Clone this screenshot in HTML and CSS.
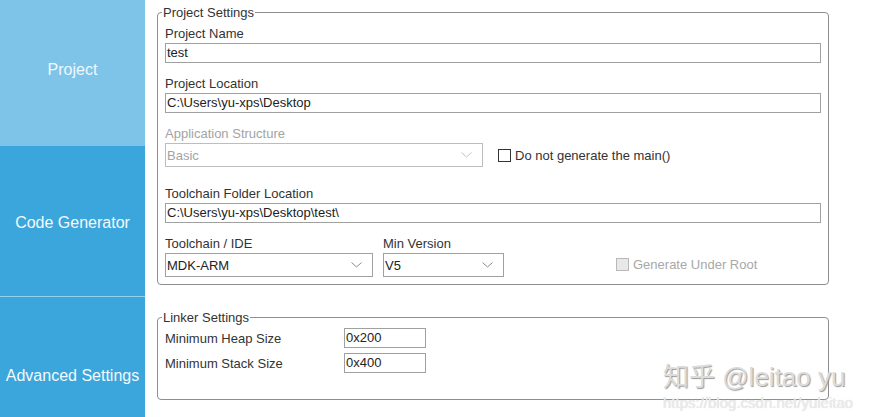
FILE: index.html
```html
<!DOCTYPE html>
<html lang="en">
<head>
<meta charset="utf-8">
<title>Project Manager</title>
<link rel="stylesheet" href="styles.css">
</head>
<body>
<div class="page">
  <nav class="sidebar">
    <div class="tab tab-project">Project</div>
    <div class="tab tab-code">Code Generator</div>
    <div class="tab tab-advanced">Advanced Settings</div>
  </nav>
  <main class="content">
    <fieldset class="group group-project">
      <legend>Project Settings</legend>
      <div class="label first">Project Name</div>
      <div class="field">test</div>
      <div class="label">Project Location</div>
      <div class="field">C:\Users\yu-xps\Desktop</div>
      <div class="label disabled">Application Structure</div>
      <div class="row">
        <div class="select select-app disabled">
          <span>Basic</span>
          <svg class="chev" width="11" height="6" viewBox="0 0 11 6"><polyline points="0.5,0.5 5.5,5 10.5,0.5" fill="none" stroke="#c4c4c4" stroke-width="1"/></svg>
        </div>
        <label class="check check-main"><span class="box"></span>Do not generate the main()</label>
      </div>
      <div class="label label-gap">Toolchain Folder Location</div>
      <div class="field">C:\Users\yu-xps\Desktop\test\</div>
      <div class="row row-tool">
        <div class="col col-ide">
          <div class="label">Toolchain / IDE</div>
          <div class="select">
            <span>MDK-ARM</span>
            <svg class="chev" width="11" height="6" viewBox="0 0 11 6"><polyline points="0.5,0.5 5.5,5 10.5,0.5" fill="none" stroke="#8a8a8a" stroke-width="1"/></svg>
          </div>
        </div>
        <div class="col col-ver">
          <div class="label">Min Version</div>
          <div class="select">
            <span>V5</span>
            <svg class="chev" width="11" height="6" viewBox="0 0 11 6"><polyline points="0.5,0.5 5.5,5 10.5,0.5" fill="none" stroke="#8a8a8a" stroke-width="1"/></svg>
          </div>
        </div>
        <label class="check check-root disabled"><span class="box"></span>Generate Under Root</label>
      </div>
    </fieldset>

    <fieldset class="group group-linker">
      <legend>Linker Settings</legend>
      <div class="linker-grid">
        <div class="linker-label">Minimum Heap Size</div>
        <div class="field small">0x200</div>
        <div class="linker-label">Minimum Stack Size</div>
        <div class="field small">0x400</div>
      </div>
    </fieldset>
  </main>
  <div class="watermark">
    <div class="wm-main">知乎 @leitao yu</div>
    <div class="wm-url">https://blog.csdn.net/yuleitao</div>
  </div>
</div>
</body>
</html>
```

FILE: styles.css
```css
* { box-sizing: border-box; }
html, body {
  margin: 0;
  padding: 0;
  background: #ffffff;
  overflow: hidden;
}
body {
  font-family: "Liberation Sans", Arial, sans-serif;
  font-size: 13px;
  color: #333333;
}
.page {
  position: relative;
  display: flex;
  width: 873px;
  height: 417px;
  overflow: hidden;
}
.sidebar {
  width: 145px;
  flex: none;
  display: flex;
  flex-direction: column;
}
.tab {
  display: flex;
  align-items: center;
  justify-content: center;
  font-size: 16px;
  line-height: 18px;
  flex: none;
}
.tab-project {
  height: 146px;
  padding-bottom: 6px;
  background: #7ec4e8;
  color: #eef8fd;
}
.tab-code {
  height: 150px;
  padding-top: 4px;
  background: #3ba6db;
  color: #f4fafd;
}
.tab-advanced {
  height: 151px;
  padding-top: 8px;
  background: #3ba6db;
  color: #f4fafd;
  border-top: 1px solid #93d2f0;
}

.content {
  flex: 1;
  padding: 5px 0 0 12px;
}
.group {
  width: 672px;
  margin: 0;
  border: 1px solid #8e8e8e;
  border-radius: 4px;
  padding: 0 7px 7px 7px;
}
.group legend {
  font-size: 13px;
  line-height: 15px;
  color: #333333;
  padding: 0 1px;
  margin-left: -3px;
}
.label {
  line-height: 15px;
  margin-top: 13px;
  color: #333333;
}
.label.first { margin-top: 6px; }
.label.label-gap { margin-top: 19px; }
.label.disabled { color: #a3a3a3; }
.field {
  margin-top: 2px;
  height: 20px;
  border: 1px solid #a0a0a0;
  padding: 0 1px;
  line-height: 18px;
  color: #222222;
  background: #ffffff;
}
.row {
  display: flex;
  align-items: center;
}
.select {
  margin-top: 2px;
  height: 24px;
  border: 1px solid #a0a0a0;
  padding: 0 10px 0 1px;
  display: flex;
  align-items: center;
  justify-content: space-between;
  color: #222222;
  background: #ffffff;
}
.select.disabled {
  color: #a3a3a3;
  border-color: #bdbdbd;
}
.select-app { width: 318px; }
.chev { display: block; flex: none; }
.check {
  display: flex;
  align-items: center;
  line-height: 15px;
  color: #333333;
}
.check .box {
  width: 13px;
  height: 13px;
  border: 1px solid #333333;
  background: #ffffff;
  margin-right: 4px;
  flex: none;
}
.check-main {
  margin-left: 15px;
  margin-top: 2px;
}
.check.disabled { color: #a8a8a8; }
.check.disabled .box {
  border-color: #b8b8b8;
  background: #e8e8e8;
}
.row-tool {
  align-items: flex-end;
}
.col-ide { width: 208px; }
.col-ver { width: 121px; margin-left: 10px; }
.check-root {
  margin-left: 112px;
  margin-bottom: 5px;
}

.group-linker {
  margin-top: 25px;
  padding-bottom: 26px;
}
.linker-grid {
  margin-top: 3px;
  display: grid;
  grid-template-columns: 179px 82px;
  row-gap: 5px;
  align-items: center;
}
.linker-label {
  line-height: 15px;
  color: #333333;
}
.field.small {
  margin-top: 0;
}

.watermark {
  position: absolute;
  left: 663px;
  top: 363px;
  pointer-events: none;
}
.wm-main {
  font-family: "Liberation Sans", "Noto Sans CJK SC", sans-serif;
  font-size: 26px;
  line-height: 28px;
  color: #dcdcdc;
  text-shadow: 1px 1px 1px #9a9a9a;
  white-space: nowrap;
}
.wm-url {
  font-size: 15px;
  line-height: 16px;
  color: #ececec;
  text-shadow: 0 0 1px #d0d0d0;
  white-space: nowrap;
  margin-top: 4px;
}
```
